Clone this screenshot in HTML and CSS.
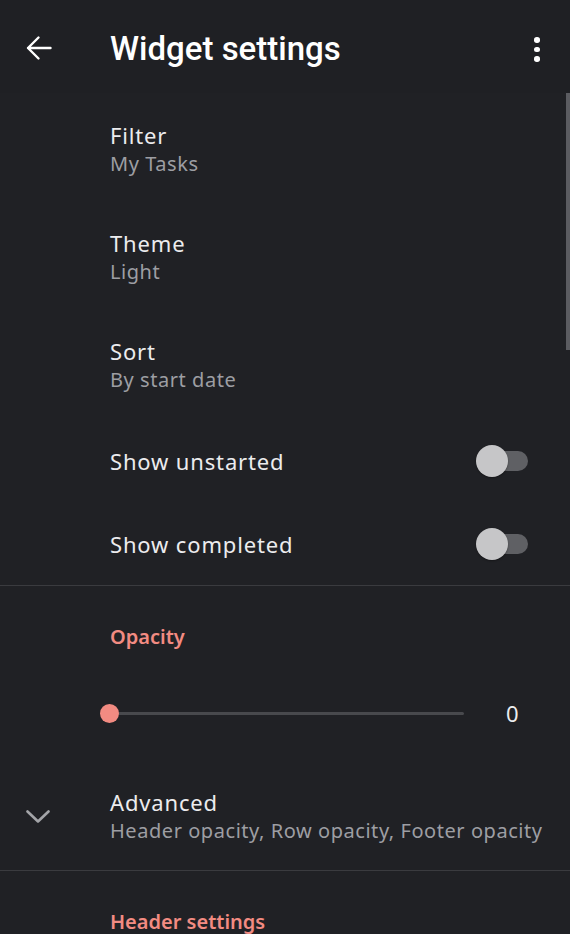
FILE: index.html
```html
<!DOCTYPE html>
<html>
<head>
<meta charset="utf-8">
<link rel="stylesheet" href="styles.css">
</head>
<body>
<div class="screen">
  <header class="appbar">
    <div class="nav-icon">
      <svg width="26" height="26" viewBox="0 0 26 26"><path d="M24.5 13H2M12.5 2.5L2 13L12.5 23.5" fill="none" stroke="#fff" stroke-width="2.4" stroke-linecap="round" stroke-linejoin="round"/></svg>
    </div>
    <h1 class="title">Widget settings</h1>
    <div class="menu-icon">
      <span class="dot"></span><span class="dot"></span><span class="dot"></span>
    </div>
  </header>
  <main class="list">
    <div class="scrollbar"></div>
    <div class="row two">
      <div class="text"><div class="primary">Filter</div><div class="secondary">My Tasks</div></div>
    </div>
    <div class="row two">
      <div class="text"><div class="primary">Theme</div><div class="secondary">Light</div></div>
    </div>
    <div class="row two">
      <div class="text"><div class="primary">Sort</div><div class="secondary">By start date</div></div>
    </div>
    <div class="row switch-row">
      <div class="text"><div class="primary">Show unstarted</div></div>
      <div class="switch"><span class="track"></span><span class="thumb"></span></div>
    </div>
    <div class="row switch-row">
      <div class="text"><div class="primary">Show completed</div></div>
      <div class="switch"><span class="track"></span><span class="thumb"></span></div>
    </div>
    <div class="divider"></div>
    <div class="category">Opacity</div>
    <div class="slider-row">
      <div class="slider"><span class="slider-track"></span><span class="slider-thumb"></span></div>
      <div class="slider-value">0</div>
    </div>
    <div class="row advanced">
      <div class="lead-icon">
        <svg width="24" height="24" viewBox="0 0 24 24"><path d="M1.5 6.5L12 16.5L22.5 6.5" fill="none" stroke="#a3a4a8" stroke-width="2.6" stroke-linecap="round" stroke-linejoin="round"/></svg>
      </div>
      <div class="text"><div class="primary">Advanced</div><div class="secondary">Header opacity, Row opacity, Footer opacity</div></div>
    </div>
    <div class="divider"></div>
    <div class="category">Header settings</div>
  </main>
</div>
</body>
</html>
```
FILE: styles.css
```css
html, body {
  margin: 0;
  padding: 0;
  background: #202125;
}
.screen {
  width: 570px;
  height: 934px;
  overflow: hidden;
  background: #202125;
  font-family: "Noto Sans", "Open Sans", sans-serif;
  color: #ececee;
}
.appbar {
  height: 93px;
  display: flex;
  align-items: center;
  background: #1f2024;
}
.nav-icon {
  width: 110px;
  display: flex;
  padding-left: 26px;
  padding-top: 2px;
  box-sizing: border-box;
}
.nav-icon svg { display: block; }
.title {
  flex: 1;
  margin: 0;
  font-family: "Roboto", sans-serif;
  font-weight: 500;
  font-size: 33px;
  color: #ffffff;
  padding-top: 4px;
}
.menu-icon {
  width: 66px;
  display: flex;
  flex-direction: column;
  align-items: center;
  gap: 4px;
  padding-top: 6px;
}
.dot {
  width: 5.5px;
  height: 5.5px;
  border-radius: 50%;
  background: #fff;
}
.list {
  position: relative;
  padding-top: 2px;
}
.scrollbar {
  position: absolute;
  right: 0;
  top: 0;
  width: 4px;
  height: 257px;
  background: #5b5c61;
}
.row {
  display: flex;
  align-items: center;
  padding-left: 110px;
  padding-right: 30px;
  box-sizing: border-box;
}
.row.two {
  height: 108px;
  padding-top: 2px;
}
.row.switch-row { height: 83px; }
.text { flex: 1; white-space: nowrap; }
.primary {
  font-size: 22px;
  line-height: 28px;
  color: #ececee;
  letter-spacing: 0.85px;
}
.secondary {
  font-size: 20px;
  line-height: 30px;
  color: #9d9ea3;
  letter-spacing: 0.55px;
}
.switch {
  position: relative;
  width: 52px;
  height: 32px;
  margin-right: 12px;
}
.track {
  position: absolute;
  left: 4px;
  right: 0;
  top: 6px;
  height: 20px;
  border-radius: 10px;
  background: #5f6064;
}
.thumb {
  position: absolute;
  left: 0;
  top: 0;
  width: 32px;
  height: 32px;
  border-radius: 50%;
  background: #c6c6c8;
  box-shadow: 0 1px 2px rgba(0,0,0,0.35);
}
.divider {
  height: 1px;
  background: #3a3b3f;
}
.category {
  padding-left: 110px;
  height: 100px;
  display: flex;
  align-items: center;
  font-size: 20px;
  font-weight: 600;
  color: #f28b82;
}
.slider-row {
  display: flex;
  align-items: center;
  height: 54px;
  padding-left: 100px;
}
.slider {
  position: relative;
  width: 364px;
  height: 19px;
}
.slider-track {
  position: absolute;
  left: 9px;
  right: 0;
  top: 8px;
  height: 3px;
  background: #48494d;
  border-radius: 2px;
}
.slider-thumb {
  position: absolute;
  left: 0;
  top: 0;
  width: 19px;
  height: 19px;
  border-radius: 50%;
  background: #f28b82;
}
.slider-value {
  margin-left: 42px;
  font-size: 22px;
  color: #ececee;
}
.row.advanced {
  height: 130px;
  padding-left: 0;
  padding-right: 0;
  padding-top: 24px;
}
.lead-icon {
  width: 110px;
  display: flex;
  padding-left: 26px;
  box-sizing: border-box;
}
.lead-icon svg { display: block; }
```
